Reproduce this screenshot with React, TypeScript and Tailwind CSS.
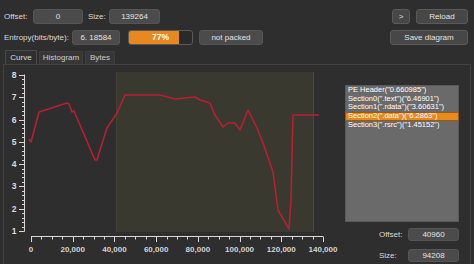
import React from "react";

const pts: [number, number][] = [
  [29, 139], [31, 142], [39, 112], [67, 103], [69, 104], [72, 112], [74, 111],
  [95, 160], [97, 160], [100, 150], [107, 128], [117, 113], [125, 95], [160, 95],
  [175, 99], [195, 97], [200, 100], [210, 103], [215, 115], [223, 127], [228, 123],
  [235, 123], [240, 130], [248, 110], [257, 128], [263, 143], [273, 172], [278, 210],
  [289, 229], [291, 200], [293, 115], [319, 115],
];

function Chart() {
  const xt: { x: number; major: boolean; v: number }[] = [];
  for (let v = 0; v <= 140000; v += 5000) {
    xt.push({ x: 31 + (v / 140000) * 292, major: v % 20000 === 0, v });
  }
  const yt: { y: number; major: boolean; v: number }[] = [];
  for (let i = 0; i <= 35; i++) {
    const v = 1 + i * 0.2;
    yt.push({ y: 231 - (v - 1) * 22.3, major: i % 5 === 0, v: Math.round(v) });
  }
  return (
    <svg width="334" height="199" viewBox="4 65 334 199" className="block shrink-0">
      <rect x="116" y="72" width="198" height="160" fill="#3a392f" />
      <line x1="313.5" y1="72" x2="313.5" y2="232" stroke="#4a4a3c" strokeWidth="1" />
      <line x1="116.5" y1="72" x2="116.5" y2="232" stroke="#434234" strokeWidth="1" />
      <polyline
        points={pts.map((p) => p.join(",")).join(" ")}
        fill="none"
        stroke="#b81f33"
        strokeWidth="1.6"
        strokeLinejoin="round"
      />
      {/* y axis */}
      <line x1="24.5" y1="74.5" x2="24.5" y2="231.5" stroke="#d8d8d8" strokeWidth="1" />
      {yt.map((t, i) => (
        <line
          key={i}
          x1={t.major ? 19 : 22}
          y1={Math.round(t.y) + 0.5}
          x2="24.5"
          y2={Math.round(t.y) + 0.5}
          stroke="#d8d8d8"
          strokeWidth="1"
        />
      ))}
      {yt
        .filter((t) => t.major)
        .map((t, i) => (
          <text
            key={i}
            x="16.5"
            y={t.y + 3}
            textAnchor="end"
            fontFamily="Liberation Sans, sans-serif"
            fontSize="8.5"
            fontWeight="bold"
            fill="#dcdcdc"
          >
            {t.v}
          </text>
        ))}
      {/* x axis */}
      <line x1="31" y1="236.5" x2="323" y2="236.5" stroke="#d8d8d8" strokeWidth="1" />
      {xt.map((t, i) => (
        <line
          key={i}
          x1={Math.round(t.x) + 0.5}
          y1="236.5"
          x2={Math.round(t.x) + 0.5}
          y2={t.major ? 242 : 239.5}
          stroke="#d8d8d8"
          strokeWidth="1"
        />
      ))}
      {xt
        .filter((t) => t.major)
        .map((t, i) => (
          <text
            key={i}
            x={t.x}
            y="252"
            textAnchor="middle"
            fontFamily="Liberation Sans, sans-serif"
            fontSize="8"
            fontWeight="bold"
            fill="#d4d4d4"
          >
            {t.v.toLocaleString("en-US")}
          </text>
        ))}
    </svg>
  );
}

export default function App() {
  const items = [
    'PE Header("0.660985")',
    'Section0(".text")("6.46901")',
    'Section1(".rdata")("3.60631")',
    'Section2(".data")("6.2863")',
    'Section3(".rsrc")("1.45152")',
  ];
  return (
    <div className="w-[474px] h-[264px] overflow-hidden bg-[#2e2e2e] font-['Liberation_Sans',sans-serif] text-[8px] text-[#dadada] leading-none">
      <div className="flex justify-between pt-[9px] pl-[4px] pr-[6px]">
        <div className="flex flex-col gap-[6px]">
          <div className="flex items-center h-[15px]">
            <span className="w-[29px]">Offset:</span>
            <div className="w-[50px] h-[15px] flex items-center justify-center rounded-[3px] bg-[#4b4b4b] border border-[#555555] text-[#e4e4e4]">0</div>
            <span className="w-[26px] pl-[5px]">Size:</span>
            <div className="w-[51px] h-[15px] flex items-center justify-center rounded-[3px] bg-[#4b4b4b] border border-[#555555] text-[#e4e4e4]">139264</div>
          </div>
          <div className="flex items-center h-[15px]">
            <span className="w-[68px]">Entropy(bits/byte):</span>
            <div className="w-[48px] h-[15px] flex items-center justify-center rounded-[3px] bg-[#4b4b4b] border border-[#555555] text-[#e4e4e4]">6. 18584</div>
            <div className="ml-[8px] w-[65px] h-[15px] relative flex rounded-[3px] border border-[#5a5a5a] bg-[#2a2a2a] overflow-hidden">
              <div className="w-[50px] h-full bg-[#e8891f]" />
              <span className="absolute inset-0 flex items-center justify-center font-bold text-white text-[8.5px]">77%</span>
            </div>
            <div className="ml-[6px] w-[64px] h-[15px] flex items-center justify-center rounded-[3px] bg-[#4b4b4b] border border-[#555555] text-[#e4e4e4]">not packed</div>
          </div>
        </div>
        <div className="flex flex-col items-end gap-[6px]">
          <div className="flex items-center gap-[6px] h-[15px]">
            <div className="w-[18px] h-[15px] flex items-center justify-center rounded-[3px] bg-[#474747] border border-[#5a5a5a] text-[#e4e4e4]">&gt;</div>
            <div className="w-[52px] h-[15px] flex items-center justify-center rounded-[3px] bg-[#474747] border border-[#5a5a5a] text-[#e4e4e4]">Reload</div>
          </div>
          <div className="w-[78px] h-[15px] flex items-center justify-center rounded-[3px] bg-[#474747] border border-[#5a5a5a] text-[#e4e4e4]">Save diagram</div>
        </div>
      </div>
      <div className="flex items-end gap-[2px] pl-[5px] mt-[5px] h-[14px]">
        <div className="w-[32px] h-[14px] flex items-center justify-center border border-b-0 border-[#4a4a4a] bg-[#303030] text-[#dcdcdc]">Curve</div>
        <div className="w-[44px] h-[13px] flex items-center justify-center border border-b-0 border-[#3e3e3e] bg-[#373737] text-[#cfcfcf]">Histogram</div>
        <div className="w-[30px] h-[13px] flex items-center justify-center border border-b-0 border-[#3e3e3e] bg-[#373737] text-[#cfcfcf]">Bytes</div>
      </div>
      <div className="mx-[3px] h-[210px] border border-[#424242] bg-[#2e2e2e] flex">
        <Chart />
        <div className="flex-1 flex flex-col pt-[20px]">
          <div className="ml-[7px] w-[114px] h-[137px] bg-[#6a6a6a] border border-[#595959] text-[7.5px] leading-[8.7px] text-white">
            {items.map((t, i) => (
              <div
                key={i}
                className={
                  i === 3
                    ? "pl-[2px] bg-[#e8891f] border border-[#9a5a12] -mx-px px-[2px] h-[8.7px] flex items-center whitespace-nowrap"
                    : "pl-[2px] h-[8.7px] flex items-center whitespace-nowrap"
                }
              >
                {t}
              </div>
            ))}
          </div>
          <div className="flex items-center mt-[6px] pl-[41px] h-[13px]">
            <span className="w-[29px]">Offset:</span>
            <div className="w-[51px] h-[13px] flex items-center justify-center rounded-[3px] bg-[#4b4b4b] border border-[#555555] text-[#e4e4e4]">40960</div>
          </div>
          <div className="flex items-center mt-[8px] pl-[41px] h-[13px]">
            <span className="w-[29px]">Size:</span>
            <div className="w-[51px] h-[13px] flex items-center justify-center rounded-[3px] bg-[#4b4b4b] border border-[#555555] text-[#e4e4e4]">94208</div>
          </div>
        </div>
      </div>
    </div>
  );
}
